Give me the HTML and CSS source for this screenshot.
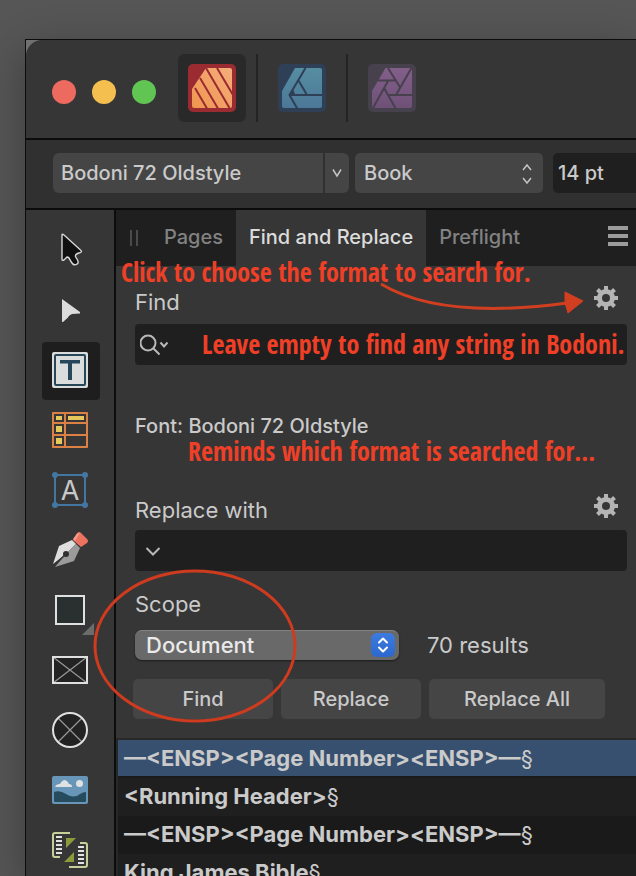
FILE: index.html
```html
<!DOCTYPE html>
<html lang="en">

<head>
    <meta charset="utf-8">
    <title>Find and Replace</title>
    <link rel="stylesheet" href="styles.css">
</head>

<body>
    <div class="window">

        <header class="titlebar">
            <div class="lights">
                <span class="light red"></span>
                <span class="light yellow"></span>
                <span class="light green"></span>
            </div>
            <div class="apps">
                <button class="app selected" aria-label="Publisher">
                    <svg width="48" height="48" viewBox="0 0 48 48">
                        <defs>
                            <linearGradient id="orange" x1="0" y1="1" x2="1" y2="0">
                                <stop offset="0" stop-color="#f0954f" />
                                <stop offset="1" stop-color="#f4ae7c" />
                            </linearGradient>
                        </defs>
                        <rect width="48" height="48" rx="5" fill="#9a2b31" />
                        <path d="M18 4H42a2 2 0 0 1 2 2V42a2 2 0 0 1-2 2H6a2 2 0 0 1-2-2V25Z" fill="url(#orange)" />
                        <path d="M7 24L19 44.500M12 14L30 44.500M18 4L41.500 44M29 4L45 31" stroke="#9a2b31" stroke-width="2" fill="none" />
                    </svg>
                </button>
                <span class="separator"></span>
                <button class="app" aria-label="Designer">
                    <svg width="48" height="48" viewBox="0 0 48 48">
                        <defs>
                            <linearGradient id="teal" x1="0" y1="1" x2="0" y2="0">
                                <stop offset="0" stop-color="#4b7897" />
                                <stop offset="1" stop-color="#568ea3" />
                            </linearGradient>
                        </defs>
                        <rect width="48" height="48" rx="5" fill="#2f3f56" />
                        <path d="M17 4H42a2 2 0 0 1 2 2V42a2 2 0 0 1-2 2H6a2 2 0 0 1-2-2V27Z" fill="url(#teal)" />
                        <path d="M27.500 4L11.500 31L19.500 45M11.500 31H45M20.500 16.500L29 31" stroke="#2f3f56" stroke-width="2" fill="none" />
                        <path d="M11 31L15 25L17 30Z" fill="#2f3f56" />
                    </svg>
                </button>
                <span class="separator"></span>
                <button class="app" aria-label="Photo">
                    <svg width="48" height="48" viewBox="0 0 48 48">
                        <defs>
                            <linearGradient id="purple" x1="0" y1="1" x2="0" y2="0">
                                <stop offset="0" stop-color="#6f5178" />
                                <stop offset="1" stop-color="#835f89" />
                            </linearGradient>
                        </defs>
                        <rect width="48" height="48" rx="5" fill="#46414d" />
                        <path d="M17.500 4H42a2 2 0 0 1 2 2V42a2 2 0 0 1-2 2H6a2 2 0 0 1-2-2V27Z" fill="url(#purple)" />
                        <path d="M20 4L32.500 24M44 3L28 31M45 31H21M28 45L16 24M5 44L20 17M10 16.500H28" stroke="#46414d" stroke-width="2" fill="none" />
                    </svg>
                </button>
            </div>
        </header>

        <div class="toolbar">
            <div class="combo">
                <input class="combo-text" type="text" value="Bodoni 72 Oldstyle" aria-label="Font family">
                <button class="combo-arrow" aria-label="Choose font">
                    <svg width="10" height="10" viewBox="0 0 10 10"><path d="M1 1.500L5 8L9 1.500" /></svg>
                </button>
            </div>
            <div class="style-box">
                <select class="style-select" aria-label="Font style">
                    <option>Book</option>
                </select>
                <svg class="style-arrows" width="10" height="20" viewBox="0 0 10 20"><path d="M1 6L5 1L9 6M1 14L5 19L9 14" /></svg>
            </div>
            <input class="size" type="text" value="14 pt" aria-label="Font size">
        </div>

        <div class="workspace">
            <nav class="tools">
                <button class="tool" aria-label="Move">
                    <svg width="36" height="36" viewBox="0 0 36 36">
                        <path d="M10 3V27Q10 29 12 28L15 25Q17 25 18 28L20 31Q22 34 25 32Q27 31 25.500 28L23.500 24.500Q23 22 27 21Q31 20 28.500 18L12 3Q10 1.500 10 3Z" fill="#101010" stroke="#d6d6d6" stroke-width="1.400" />
                    </svg>
                </button>
                <button class="tool" aria-label="Node">
                    <svg width="36" height="36" viewBox="0 0 36 36">
                        <path d="M10 7L28 20V21.500L20 22Q17 23 15.500 26L11 30H10Z" fill="#dcdcdc" />
                    </svg>
                </button>
                <button class="tool selected" aria-label="Frame text">
                    <svg width="36" height="36" viewBox="0 0 36 36">
                        <rect width="36" height="36" rx="2" fill="#dbdcdc" />
                        <rect x="3" y="3" width="30" height="30" rx="1" fill="none" stroke="#26475a" stroke-width="2" />
                        <path d="M8 8H28V11.500H20V28H16V11.500H8Z" fill="#26475a" />
                    </svg>
                </button>
                <button class="tool" aria-label="Table">
                    <svg width="36" height="36" viewBox="0 0 36 36">
                        <path d="M1 1H35V35H1ZM13 1V35M1 11H35M1 23H35" fill="none" stroke="#dc8145" stroke-width="2" stroke-linejoin="round" />
                        <path d="M4 4H10V8H4ZM16 4H32V8H16ZM4 14H10V20H4ZM4 26H10V32H4Z" fill="#e6c75c" />
                    </svg>
                </button>
                <button class="tool" aria-label="Artistic text">
                    <svg width="36" height="36" viewBox="0 0 36 36">
                        <rect x="3" y="3" width="30" height="30" fill="none" stroke="#4377a1" stroke-width="2" />
                        <circle cx="3" cy="3" r="3" fill="#4377a1" />
                        <circle cx="33" cy="3" r="3" fill="#4377a1" />
                        <circle cx="3" cy="33" r="3" fill="#4377a1" />
                        <circle cx="33" cy="33" r="3" fill="#4377a1" />
                        <text class="letter" x="18" y="28" text-anchor="middle">A</text>
                    </svg>
                </button>
                <button class="tool" aria-label="Pen">
                    <svg width="36" height="36" viewBox="0 0 36 36">
                        <path d="M1 32L7 14L20 8L24 12L14 22Z" fill="#dedede" />
                        <path d="M3 35L22 29L28 16L24 12L14 22Z" fill="#9b9b9b" />
                        <path d="M1 34L14 22" stroke="#363636" stroke-width="1.500" />
                        <circle cx="14" cy="22" r="3" fill="#303030" />
                        <path d="M21 8L25 1.500Q27 -1 29 1L35 7Q37 9 35 11L29 15Z" fill="#ed7260" />
                        <path d="M21 7L25 1.500L28 1L23 9Z" fill="#f39a8b" />
                    </svg>
                </button>
                <button class="tool has-more" aria-label="Rectangle">
                    <svg width="36" height="36" viewBox="0 0 36 36">
                        <rect x="4" y="4" width="28" height="28" fill="#2a302f" stroke="#e0e0e0" stroke-width="2" />
                    </svg>
                </button>
                <button class="tool" aria-label="Picture frame rectangle">
                    <svg width="36" height="36" viewBox="0 0 36 36">
                        <rect x="1" y="5" width="34" height="26" fill="#232323" />
                        <path d="M1 5L35 31M35 5L1 31" stroke="#989898" stroke-width="1.200" />
                        <rect x="1" y="5" width="34" height="26" fill="none" stroke="#e0e0e0" stroke-width="2" />
                    </svg>
                </button>
                <button class="tool" aria-label="Picture frame ellipse">
                    <svg width="36" height="36" viewBox="0 0 36 36">
                        <circle cx="18" cy="18" r="17" fill="#232323" />
                        <path d="M6 6L30 30M30 6L6 30" stroke="#989898" stroke-width="1.200" />
                        <circle cx="18" cy="18" r="17" fill="none" stroke="#e0e0e0" stroke-width="2" />
                    </svg>
                </button>
                <button class="tool" aria-label="Place image">
                    <svg width="36" height="36" viewBox="0 0 36 36">
                        <rect y="4" width="36" height="28" rx="2" fill="#6796b8" />
                        <path d="M2 20Q8 18 14 22Q22 27 28 22Q31 20 34 20V29Q34 30 33 30H3Q2 30 2 29Z" fill="#264b5c" />
                        <path d="M3 15Q4 12 8 12Q10 8 13 8Q16 9 17 12Q20 12 20 15Z" fill="#e0e1e3" />
                        <circle cx="27.500" cy="11.500" r="3.500" fill="#e0e1e3" />
                    </svg>
                </button>
                <button class="tool" aria-label="Data merge">
                    <svg width="36" height="36" viewBox="0 0 36 36">
                        <path d="M18 1H3Q1 1 1 3V23Q1 25 3 25H8M28 11H33Q35 11 35 13V33Q35 35 33 35H17" fill="none" stroke="#c7cf99" stroke-width="2" />
                        <path d="M4 5H10M4 9H10M4 13H10M4 17H10M4 21H10M26 15H32M26 19H32M26 23H32M26 27H32M26 31H32" stroke="#e2e2e2" stroke-width="2" />
                        <path d="M14 6H24L14 16ZM22 20V30H12Z" fill="#8c9a3b" />
                    </svg>
                </button>
            </nav>

            <main class="panel">
                <div class="tabs">
                    <span class="grip"></span>
                    <button class="tab">Pages</button>
                    <button class="tab active">Find and Replace</button>
                    <button class="tab">Preflight</button>
                    <button class="menu" aria-label="Panel menu"><span></span><span></span><span></span></button>
                </div>

                <form class="search">
                    <div class="field-head find-head">
                        <label for="find">Find</label>
                        <button type="button" class="gear" aria-label="Find format">
                            <svg width="24" height="24" viewBox="0 0 24 24">
                                <circle cx="12" cy="12" r="6.500" />
                                <path d="M12 0V5M12 19V24M0 12H5M19 12H24M3.500 3.500L7 7M17 17L20.500 20.500M3.500 20.500L7 17M17 7L20.500 3.500" />
                            </svg>
                        </button>
                    </div>
                    <div class="field">
                        <svg class="search-icon" width="30" height="22" viewBox="0 0 30 22">
                            <circle cx="8" cy="9" r="7.500" />
                            <path d="M13.500 14.500L19.500 20.500M20.500 8.500L24 12.500L27.500 8.500" />
                        </svg>
                        <input id="find" type="text">
                    </div>
                    <p class="format">Font: Bodoni 72 Oldstyle</p>

                    <div class="field-head replace-head">
                        <label for="replace">Replace with</label>
                        <button type="button" class="gear" aria-label="Replace format">
                            <svg width="24" height="24" viewBox="0 0 24 24">
                                <circle cx="12" cy="12" r="6.500" />
                                <path d="M12 0V5M12 19V24M0 12H5M19 12H24M3.500 3.500L7 7M17 17L20.500 20.500M3.500 20.500L7 17M17 7L20.500 3.500" />
                            </svg>
                        </button>
                    </div>
                    <div class="field">
                        <svg class="down-icon" width="16" height="10" viewBox="0 0 16 10"><path d="M1.500 2L8 8.500L14.500 2" /></svg>
                        <input id="replace" type="text">
                    </div>

                    <label class="scope-label" for="scope">Scope</label>
                    <div class="scope-row">
                        <div class="scope-box">
                            <select id="scope" class="scope">
                                <option>Document</option>
                            </select>
                            <span class="scope-arrows">
                                <svg width="12" height="16" viewBox="0 0 12 16"><path d="M2 5.500L6 1.500L10 5.500M2 10.500L6 14.500L10 10.500" /></svg>
                            </span>
                        </div>
                        <span class="count">70 results</span>
                    </div>

                    <div class="actions">
                        <button type="button" class="action">Find</button>
                        <button type="button" class="action">Replace</button>
                        <button type="button" class="action wide">Replace All</button>
                    </div>
                </form>

                <ul class="results">
                    <li class="result current">—&lt;ENSP&gt;&lt;Page Number&gt;&lt;ENSP&gt;—<span class="mark">§</span></li>
                    <li class="result">&lt;Running Header&gt;<span class="mark">§</span></li>
                    <li class="result">—&lt;ENSP&gt;&lt;Page Number&gt;&lt;ENSP&gt;—<span class="mark">§</span></li>
                    <li class="result">King James Bible<span class="mark">§</span></li>
                </ul>

                <!-- red notes drawn over the panel -->
                <p class="note note-format">Click to choose the format to search for.</p>
                <p class="note note-empty">Leave empty to find any string in Bodoni.</p>
                <p class="note note-reminder">Reminds which format is searched for...</p>
                <svg class="arrow" width="210" height="40" viewBox="0 0 210 40">
                    <path d="M4 4Q64 40 190 23" fill="none" stroke="#d23f20" stroke-width="3" />
                    <path d="M188 12L206 21L191 33L188 23Z" fill="#d23f20" stroke="#d23f20" stroke-linejoin="round" />
                </svg>
                <svg class="circle" width="206" height="156" viewBox="0 0 206 156">
                    <ellipse cx="103" cy="78" rx="100" ry="75" fill="none" stroke="#cf3b1e" stroke-width="3" />
                </svg>
            </main>
        </div>
    </div>
</body>

</html>
```

FILE: styles.css
```css
* {
    box-sizing: border-box;
}

body {
    margin: 0;
    height: 100vh;
    overflow: hidden;
    padding: 39px 0 0 25px;
    background-color: #565656;
    font-family: Inter, "Liberation Sans", sans-serif;
    font-size: 20px;
    line-height: 24px;
    font-weight: 500;
    color: #cacaca;
}

button, input, select {
    font: inherit;
    color: inherit;
    border: none;
    margin: 0;
    padding: 0;
    background: none;
    border-radius: 0;
    appearance: none;
    outline: none;
}

svg {
    display: block;
}

.window {
    height: 100%;
    display: flex;
    flex-direction: column;
    background-color: #707070;
    border: 1px solid #0c0c0c;
    border-width: 1px 0 0 1px;
    box-shadow: 0 12px 40px rgba(0, 0, 0, 0.3);
}

/* title bar */
.titlebar {
    flex: none;
    display: flex;
    align-items: center;
    gap: 22px;
    height: 100px;
    padding: 0 26px 2px;
    background-color: #363636;
    border-bottom: 2px solid #0c0c0c;
    border-top-left-radius: 16px;
}

.lights {
    display: flex;
    gap: 16px;
    padding-top: 8px;
}

.light {
    width: 24px;
    height: 24px;
    border-radius: 50%;
}

.red {
    background-color: #ed6a5f;
}

.yellow {
    background-color: #f5bf4f;
}

.green {
    background-color: #61c554;
}

.apps {
    display: flex;
    gap: 10px;
}

.app {
    padding: 10px;
    border-radius: 6px;
}

.app.selected {
    background-color: #292929;
}

.separator {
    width: 2px;
    background-color: #242424;
}

/* context toolbar */
.toolbar {
    flex: none;
    display: flex;
    align-items: center;
    height: 70px;
    padding: 0 0 2px 27px;
    background-color: #303030;
    border-bottom: 2px solid #0c0c0c;
}

.combo {
    display: flex;
    gap: 2px;
    margin-right: 6px;
}

.combo-text {
    width: 270px;
    height: 40px;
    padding-left: 8px;
    background-color: #454545;
    border-radius: 6px 0 0 6px;
}

.combo-arrow {
    width: 24px;
    display: flex;
    align-items: center;
    justify-content: center;
    background-color: #454545;
    border-radius: 0 6px 6px 0;
}

.combo-arrow path, .style-arrows path {
    fill: none;
    stroke: #c4c4c4;
    stroke-width: 1.5;
}

.style-box {
    position: relative;
    margin-right: 10px;
}

.style-select {
    width: 188px;
    height: 40px;
    padding-left: 9px;
    background-color: #454545;
    border-radius: 5px;
}

.style-arrows {
    position: absolute;
    top: 11px;
    right: 11px;
    pointer-events: none;
}

.size {
    flex: 1;
    min-width: 0;
    height: 40px;
    padding-left: 5px;
    background-color: #1f1f1f;
    border-radius: 5px 0 0 5px;
}

.workspace {
    flex: 1;
    min-height: 0;
    display: flex;
    background-color: #363636;
}

/* tools down the left side */
.tools {
    flex: none;
    width: 90px;
    display: flex;
    flex-direction: column;
    align-items: center;
    gap: 2px;
    padding: 12px 0 0 2px;
    border-right: 2px solid #0c0c0c;
    overflow: hidden;
}

.tool {
    flex: none;
    position: relative;
    padding: 10px 12px 12px 10px;
    border-radius: 4px;
}

.tool svg {
    overflow: visible;
}

.tool.selected {
    background-color: #1e1e1e;
}

.letter {
    font-family: Inter, sans-serif;
    font-size: 27px;
    font-weight: 400;
    fill: #c8c8c8;
}

.has-more::after {
    content: "";
    position: absolute;
    right: 6px;
    bottom: 5px;
    border-left: 12px solid transparent;
    border-bottom: 12px solid #6c6c6c;
}

/* studio panel */
.panel {
    position: relative;
    flex: 1;
    min-width: 0;
}

.tabs {
    display: flex;
    align-items: center;
    height: 56px;
    background-color: #1f1f1f;
    color: #828282;
}

.grip {
    width: 8px;
    height: 16px;
    margin: 0 13px 0 14px;
    border: 2px solid #4b4b4b;
    border-width: 0 2px;
}

.tab {
    height: 56px;
    padding: 0 13px 2px;
    white-space: nowrap;
}

.tab.active {
    background-color: #363636;
    color: #dcdcdc;
}

.menu {
    width: 20px;
    margin: 0 8px 4px auto;
    display: flex;
    flex-direction: column;
    gap: 4px;
}

.menu span {
    height: 4px;
    background-color: #9b9b9b;
}

.search {
    padding: 20px 9px 19px 19px;
}

.field-head {
    display: flex;
    justify-content: space-between;
    padding-right: 9px;
    font-size: 22px;
    font-weight: 400;
}

.find-head {
    margin-bottom: 10px;
}

.replace-head {
    margin-bottom: 8px;
}

.field-head label {
    padding-top: 4px;
}

.gear {
    height: 24px;
}

.gear circle {
    fill: none;
    stroke: #b4b4b4;
    stroke-width: 5;
}

.gear path {
    stroke: #b4b4b4;
    stroke-width: 4;
}

.field {
    display: flex;
    align-items: center;
    height: 41px;
    background-color: #1f1f1f;
    border-radius: 4px;
}

.field input {
    flex: 1;
    min-width: 0;
    height: 100%;
    padding: 0 8px;
}

.search-icon, .down-icon {
    flex: none;
    fill: none;
    stroke: #b8b8b8;
    stroke-width: 2;
    margin-left: 5px;
}

.down-icon {
    margin-left: 10px;
}

.format {
    margin: 49px 0 56px;
}

.scope-label {
    display: block;
    margin: 21px 0 14px;
    font-size: 22px;
    font-weight: 400;
}

.scope-row {
    display: flex;
    align-items: center;
    gap: 28px;
    font-size: 22px;
    font-weight: 400;
}

.scope-box {
    position: relative;
}

.scope {
    display: block;
    width: 264px;
    height: 30px;
    padding: 0 0 2px 11px;
    background-color: #696969;
    border-top: 1px solid #828282;
    border-radius: 7px;
    box-shadow: 0 1px 2px rgba(0, 0, 0, 0.5);
    color: #eaeaea;
    font-weight: 500;
}

.scope-arrows {
    position: absolute;
    top: 3px;
    right: 4px;
    width: 24px;
    height: 24px;
    display: flex;
    align-items: center;
    justify-content: center;
    background: linear-gradient(#3d7be0, #2c68cd);
    border-radius: 6px;
    pointer-events: none;
}

.scope-arrows path {
    fill: none;
    stroke: #ffffff;
    stroke-width: 2;
    stroke-linecap: round;
    stroke-linejoin: round;
}

.actions {
    display: flex;
    gap: 8px;
    margin: 19px 0 0 -2px;
}

.action {
    width: 140px;
    height: 40px;
    background-color: #454545;
    border-radius: 5px;
}

.action.wide {
    width: 176px;
}

.results {
    list-style: none;
    margin: 0;
    padding: 0 0 0 2px;
    border-top: 2px solid #282828;
    background-color: #282828;
    font-size: 22px;
    font-weight: 700;
}

.result {
    height: 38px;
    padding: 6px;
    background-color: #1f1f1f;
    white-space: nowrap;
}

.result:nth-child(odd) {
    background-color: #1a1a1a;
}

.result.current {
    background-color: #38506f;
    border-bottom: 2px solid #1a1a1a;
}

.mark {
    font-weight: 400;
}

/* notes */
.note {
    position: absolute;
    margin: 0;
    font-family: "Liberation Sans Narrow", "Open Sans Condensed", "DejaVu Sans Condensed", sans-serif;
    font-size: 26px;
    line-height: 28px;
    font-weight: 700;
    color: #ef4027;
    white-space: nowrap;
}

.note-format {
    top: 48px;
    left: 5px;
}

.note-empty {
    top: 120px;
    left: 86px;
}

.note-reminder {
    top: 227px;
    left: 72px;
}

.arrow {
    position: absolute;
    top: 70px;
    left: 261px;
    pointer-events: none;
}

.circle {
    position: absolute;
    top: 358px;
    left: -24px;
    pointer-events: none;
}
```
